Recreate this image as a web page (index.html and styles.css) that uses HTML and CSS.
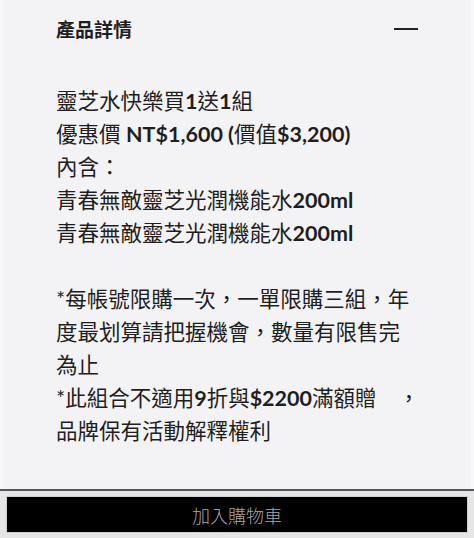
FILE: index.html
```html
<!DOCTYPE html>
<html lang="zh-TW">
<head>
    <meta charset="UTF-8">
    <meta name="viewport" content="width=device-width, initial-scale=1.0">
    <title>產品詳情</title>
    <link rel="stylesheet" href="styles.css">
</head>
<body>
    <div class="page">
        <div class="detail">
            <div class="detail-head">
                <h2>產品詳情</h2>
                <span class="collapse"></span>
            </div>
            <div class="detail-body">
                <p>靈芝水快樂買<b>1</b>送<b>1</b>組</p>
                <p>優惠價 <b>NT$1,600 (</b>價值<b>$3,200)</b></p>
                <p>內含：</p>
                <p>青春無敵靈芝光潤機能水<b>200ml</b></p>
                <p>青春無敵靈芝光潤機能水<b>200ml</b></p>
                <p class="blank">&nbsp;</p>
                <p>*每帳號限購一次，一單限購三組，年度最划算請把握機會，數量有限售完為止</p>
                <p>*此組合不適用<b>9</b>折與<b>$2200</b>滿額贈　，品牌保有活動解釋權利</p>
            </div>
        </div>
        <div class="cart-bar">
            <button class="cart-btn">加入購物車</button>
        </div>
    </div>
</body>
</html>
```

FILE: styles.css
```css
html, body {
    margin: 0;
    padding: 0;
}
body {
    font-family: Lato, "Noto Sans CJK TC", sans-serif;
    color: #1e1e1e;
    background-color: #f3f3f5;
}
.page {
    display: flex;
    flex-direction: column;
    height: 538px;
    overflow: hidden;
}
.detail {
    flex: 1;
    background-color: #f3f3f5;
    border-left: 3px solid #f8f8fa;
    border-right: 3px solid #f8f8fa;
    padding: 0 51px 0 53px;
}
.detail-head {
    display: flex;
    align-items: center;
    justify-content: space-between;
    height: 57px;
}
.detail-head h2 {
    margin: 0;
    font-size: 19px;
    font-weight: bold;
    font-family: "Noto Sans CJK TC", sans-serif;
}
.collapse {
    width: 24px;
    height: 2px;
    background-color: #222;
    margin-right: 2px;
}
.detail-body {
    padding-top: 28px;
    font-size: 21.5px;
    line-height: 33px;
}
.detail-body p {
    margin: 0;
}
.detail-body b {
    font-weight: bold;
}
.cart-bar {
    border-top: 2px solid #555;
    background-color: #e6e6e6;
    padding: 5px 6px 5px;
}
.cart-btn {
    display: block;
    width: 100%;
    height: 37px;
    background-color: #000;
    border: 1px solid #cfcfcf;
    color: #a8a8a8;
    font-family: "Noto Sans CJK TC", sans-serif;
    font-weight: 300;
    font-size: 18px;
    padding: 0;
    cursor: pointer;
}
```
